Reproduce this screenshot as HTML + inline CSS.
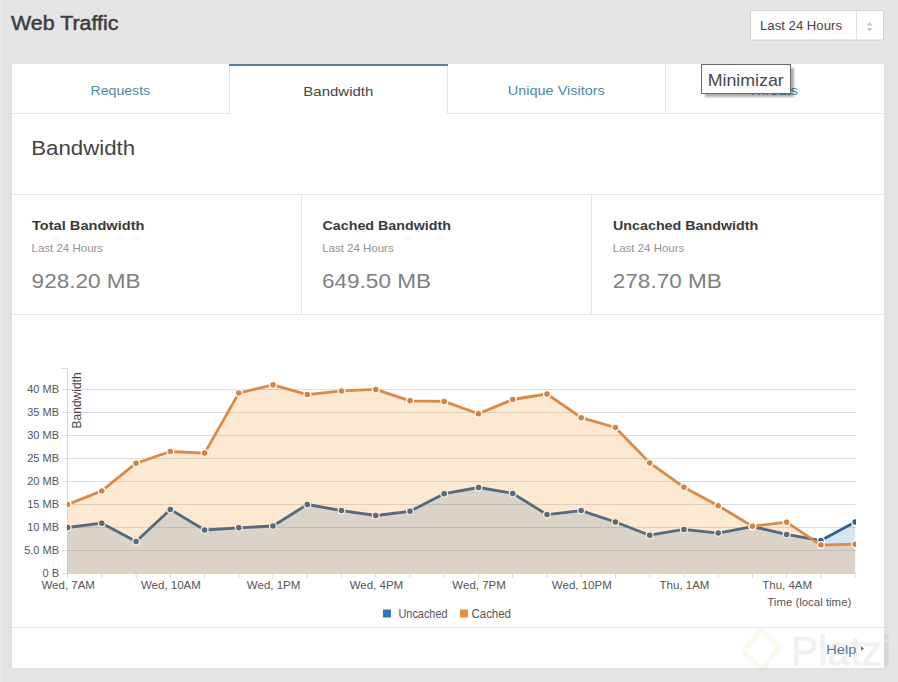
<!DOCTYPE html>
<html><head><meta charset="utf-8"><style>
html,body{margin:0;padding:0;background:#e5e5e5;width:898px;height:682px;overflow:hidden;}
svg{display:block;position:absolute;left:0;top:0;}
text{font-family:"Liberation Sans",sans-serif;}
.ax{font-size:11px;fill:#555;}
</style></head><body>
<svg width="898" height="682" viewBox="0 0 898 682">
<rect x="0" y="0" width="898" height="682" fill="#e5e5e5"/>
<text x="11" y="30" font-size="20.5" fill="#3d3d3d" stroke="#3d3d3d" stroke-width="0.5" textLength="107.5" lengthAdjust="spacingAndGlyphs">Web Traffic</text>
<!-- dropdown -->
<rect x="750.5" y="10.5" width="133" height="29.5" fill="#fff" stroke="#d2d2d2"/>
<line x1="856.5" y1="11" x2="856.5" y2="40" stroke="#e0e0e0"/>
<path d="M866.8,25.5 L869.6,22 L872.4,25.5 Z" fill="#c4c4c4"/>
<path d="M866.8,28 L869.6,31.5 L872.4,28 Z" fill="#c4c4c4"/>
<text x="760" y="30" font-size="13" fill="#444" textLength="82" lengthAdjust="spacingAndGlyphs">Last 24 Hours</text>
<!-- panel -->
<rect x="8" y="64" width="4" height="604.5" fill="#e1e1e1"/><rect x="884" y="64" width="3" height="604.5" fill="#e1e1e1"/><rect x="0" y="0" width="2" height="682" fill="#e9e9e9"/>
<rect x="9" y="668" width="878" height="3" fill="#e1e1e1"/>
<rect x="12" y="64" width="872" height="604" fill="#fff"/>
<!-- tabs -->
<line x1="12" y1="113.5" x2="229" y2="113.5" stroke="#e6e6e6"/>
<line x1="447" y1="113.5" x2="884" y2="113.5" stroke="#e6e6e6"/>
<line x1="229.5" y1="64" x2="229.5" y2="114" stroke="#e6e6e6"/>
<line x1="447.5" y1="64" x2="447.5" y2="114" stroke="#e6e6e6"/>
<line x1="665.5" y1="64" x2="665.5" y2="114" stroke="#e6e6e6"/>
<rect x="229" y="64" width="219" height="2" fill="#5a7f9f"/>
<text x="90.6" y="95" font-size="13.5" fill="#4b87a8" textLength="59.5" lengthAdjust="spacingAndGlyphs">Requests</text>
<text x="303.3" y="95.8" font-size="13.5" fill="#444" textLength="70" lengthAdjust="spacingAndGlyphs">Bandwidth</text>
<text x="507.8" y="95" font-size="13.5" fill="#4b87a8" textLength="97" lengthAdjust="spacingAndGlyphs">Unique Visitors</text>
<text x="748" y="95" font-size="13.5" fill="#4b87a8" textLength="50" lengthAdjust="spacingAndGlyphs">Threats</text>
<!-- heading -->
<text x="31.2" y="154.8" font-size="20.5" fill="#444" textLength="104" lengthAdjust="spacingAndGlyphs">Bandwidth</text>
<line x1="12" y1="194.5" x2="884" y2="194.5" stroke="#e6e6e6"/>
<line x1="301.5" y1="195" x2="301.5" y2="314" stroke="#e6e6e6"/>
<line x1="591.5" y1="195" x2="591.5" y2="314" stroke="#e6e6e6"/>
<line x1="12" y1="314.5" x2="884" y2="314.5" stroke="#e6e6e6"/>
<text x="32" y="229.9" font-size="13" font-weight="bold" fill="#3a3a3a" textLength="112.5" lengthAdjust="spacingAndGlyphs">Total Bandwidth</text>
<text x="322.5" y="229.9" font-size="13" font-weight="bold" fill="#3a3a3a" textLength="128.5" lengthAdjust="spacingAndGlyphs">Cached Bandwidth</text>
<text x="613" y="229.9" font-size="13" font-weight="bold" fill="#3a3a3a" textLength="145.3" lengthAdjust="spacingAndGlyphs">Uncached Bandwidth</text>
<text x="31.6" y="251.6" font-size="11.5" fill="#939393" textLength="71.5" lengthAdjust="spacingAndGlyphs">Last 24 Hours</text>
<text x="322.2" y="251.6" font-size="11.5" fill="#939393" textLength="71.5" lengthAdjust="spacingAndGlyphs">Last 24 Hours</text>
<text x="612.8" y="251.6" font-size="11.5" fill="#939393" textLength="71.5" lengthAdjust="spacingAndGlyphs">Last 24 Hours</text>
<text x="31.6" y="287.5" font-size="20.5" fill="#808080" textLength="109" lengthAdjust="spacingAndGlyphs">928.20 MB</text>
<text x="322" y="287.5" font-size="20.5" fill="#808080" textLength="109" lengthAdjust="spacingAndGlyphs">649.50 MB</text>
<text x="612.8" y="287.5" font-size="20.5" fill="#808080" textLength="109" lengthAdjust="spacingAndGlyphs">278.70 MB</text>
<!-- chart -->
<line x1="62" y1="573.5" x2="856" y2="573.5" stroke="#dedede" stroke-width="1"/><line x1="62" y1="550.5" x2="856" y2="550.5" stroke="#dedede" stroke-width="1"/><line x1="62" y1="527.5" x2="856" y2="527.5" stroke="#dedede" stroke-width="1"/><line x1="62" y1="504.5" x2="856" y2="504.5" stroke="#dedede" stroke-width="1"/><line x1="62" y1="481.5" x2="856" y2="481.5" stroke="#dedede" stroke-width="1"/><line x1="62" y1="458.5" x2="856" y2="458.5" stroke="#dedede" stroke-width="1"/><line x1="62" y1="435.5" x2="856" y2="435.5" stroke="#dedede" stroke-width="1"/><line x1="62" y1="412.5" x2="856" y2="412.5" stroke="#dedede" stroke-width="1"/><line x1="62" y1="389.5" x2="856" y2="389.5" stroke="#dedede" stroke-width="1"/>
<line x1="67.5" y1="368" x2="67.5" y2="573" stroke="#d8d8d8"/>
<line x1="61" y1="368.5" x2="67" y2="368.5" stroke="#d8d8d8"/>
<line x1="67.6" y1="573" x2="67.6" y2="578" stroke="#d8d8d8" stroke-width="1"/><line x1="101.8" y1="573" x2="101.8" y2="578" stroke="#d8d8d8" stroke-width="1"/><line x1="136.1" y1="573" x2="136.1" y2="578" stroke="#d8d8d8" stroke-width="1"/><line x1="170.3" y1="573" x2="170.3" y2="578" stroke="#d8d8d8" stroke-width="1"/><line x1="204.6" y1="573" x2="204.6" y2="578" stroke="#d8d8d8" stroke-width="1"/><line x1="238.8" y1="573" x2="238.8" y2="578" stroke="#d8d8d8" stroke-width="1"/><line x1="273.0" y1="573" x2="273.0" y2="578" stroke="#d8d8d8" stroke-width="1"/><line x1="307.3" y1="573" x2="307.3" y2="578" stroke="#d8d8d8" stroke-width="1"/><line x1="341.5" y1="573" x2="341.5" y2="578" stroke="#d8d8d8" stroke-width="1"/><line x1="375.8" y1="573" x2="375.8" y2="578" stroke="#d8d8d8" stroke-width="1"/><line x1="410.0" y1="573" x2="410.0" y2="578" stroke="#d8d8d8" stroke-width="1"/><line x1="444.2" y1="573" x2="444.2" y2="578" stroke="#d8d8d8" stroke-width="1"/><line x1="478.5" y1="573" x2="478.5" y2="578" stroke="#d8d8d8" stroke-width="1"/><line x1="512.7" y1="573" x2="512.7" y2="578" stroke="#d8d8d8" stroke-width="1"/><line x1="547.0" y1="573" x2="547.0" y2="578" stroke="#d8d8d8" stroke-width="1"/><line x1="581.2" y1="573" x2="581.2" y2="578" stroke="#d8d8d8" stroke-width="1"/><line x1="615.4" y1="573" x2="615.4" y2="578" stroke="#d8d8d8" stroke-width="1"/><line x1="649.7" y1="573" x2="649.7" y2="578" stroke="#d8d8d8" stroke-width="1"/><line x1="683.9" y1="573" x2="683.9" y2="578" stroke="#d8d8d8" stroke-width="1"/><line x1="718.2" y1="573" x2="718.2" y2="578" stroke="#d8d8d8" stroke-width="1"/><line x1="752.4" y1="573" x2="752.4" y2="578" stroke="#d8d8d8" stroke-width="1"/><line x1="786.6" y1="573" x2="786.6" y2="578" stroke="#d8d8d8" stroke-width="1"/><line x1="820.9" y1="573" x2="820.9" y2="578" stroke="#d8d8d8" stroke-width="1"/><line x1="855.1" y1="573" x2="855.1" y2="578" stroke="#d8d8d8" stroke-width="1"/>
<text x="59" y="577.3" text-anchor="end" class="ax">0 B</text><text x="59" y="554.3" text-anchor="end" class="ax">5.0 MB</text><text x="59" y="531.3" text-anchor="end" class="ax">10 MB</text><text x="59" y="508.3" text-anchor="end" class="ax">15 MB</text><text x="59" y="485.3" text-anchor="end" class="ax">20 MB</text><text x="59" y="462.3" text-anchor="end" class="ax">25 MB</text><text x="59" y="439.3" text-anchor="end" class="ax">30 MB</text><text x="59" y="416.3" text-anchor="end" class="ax">35 MB</text><text x="59" y="393.3" text-anchor="end" class="ax">40 MB</text>
<text transform="translate(81,400.4) rotate(-90)" text-anchor="middle" font-size="12" fill="#444" textLength="56" lengthAdjust="spacingAndGlyphs">Bandwidth</text>
<text x="68.2" y="589" text-anchor="middle" class="ax" style="font-size:11.5px">Wed, 7AM</text><text x="170.9" y="589" text-anchor="middle" class="ax" style="font-size:11.5px">Wed, 10AM</text><text x="273.6" y="589" text-anchor="middle" class="ax" style="font-size:11.5px">Wed, 1PM</text><text x="376.4" y="589" text-anchor="middle" class="ax" style="font-size:11.5px">Wed, 4PM</text><text x="479.1" y="589" text-anchor="middle" class="ax" style="font-size:11.5px">Wed, 7PM</text><text x="581.8" y="589" text-anchor="middle" class="ax" style="font-size:11.5px">Wed, 10PM</text><text x="684.5" y="589" text-anchor="middle" class="ax" style="font-size:11.5px">Thu, 1AM</text><text x="787.2" y="589" text-anchor="middle" class="ax" style="font-size:11.5px">Thu, 4AM</text>
<defs><clipPath id="plot"><rect x="67" y="360" width="789" height="230"/></clipPath></defs>
<g clip-path="url(#plot)">
<path d="M67.6,573.2 L67.6,527.5 L101.8,523.2 L136.1,541.4 L170.3,509.4 L204.6,530.0 L238.8,527.8 L273.0,526.0 L307.3,504.5 L341.5,510.6 L375.8,515.5 L410.0,511.3 L444.2,493.7 L478.5,487.5 L512.7,493.4 L547.0,514.6 L581.2,510.6 L615.4,522.0 L649.7,535.2 L683.9,529.4 L718.2,533.1 L752.4,526.6 L786.6,534.4 L820.9,540.6 L855.1,521.9 L855.1,573.2 Z" fill="rgba(47,123,191,0.2)"/>
<polyline points="67.6,527.5 101.8,523.2 136.1,541.4 170.3,509.4 204.6,530.0 238.8,527.8 273.0,526.0 307.3,504.5 341.5,510.6 375.8,515.5 410.0,511.3 444.2,493.7 478.5,487.5 512.7,493.4 547.0,514.6 581.2,510.6 615.4,522.0 649.7,535.2 683.9,529.4 718.2,533.1 752.4,526.6 786.6,534.4 820.9,540.6 855.1,521.9" fill="none" stroke="#2d6296" stroke-width="2.8" stroke-linejoin="round"/>
<circle cx="67.6" cy="527.5" r="3.4" fill="#2d6296" stroke="#fff" stroke-width="1.3"/><circle cx="101.8" cy="523.2" r="3.4" fill="#2d6296" stroke="#fff" stroke-width="1.3"/><circle cx="136.1" cy="541.4" r="3.4" fill="#2d6296" stroke="#fff" stroke-width="1.3"/><circle cx="170.3" cy="509.4" r="3.4" fill="#2d6296" stroke="#fff" stroke-width="1.3"/><circle cx="204.6" cy="530.0" r="3.4" fill="#2d6296" stroke="#fff" stroke-width="1.3"/><circle cx="238.8" cy="527.8" r="3.4" fill="#2d6296" stroke="#fff" stroke-width="1.3"/><circle cx="273.0" cy="526.0" r="3.4" fill="#2d6296" stroke="#fff" stroke-width="1.3"/><circle cx="307.3" cy="504.5" r="3.4" fill="#2d6296" stroke="#fff" stroke-width="1.3"/><circle cx="341.5" cy="510.6" r="3.4" fill="#2d6296" stroke="#fff" stroke-width="1.3"/><circle cx="375.8" cy="515.5" r="3.4" fill="#2d6296" stroke="#fff" stroke-width="1.3"/><circle cx="410.0" cy="511.3" r="3.4" fill="#2d6296" stroke="#fff" stroke-width="1.3"/><circle cx="444.2" cy="493.7" r="3.4" fill="#2d6296" stroke="#fff" stroke-width="1.3"/><circle cx="478.5" cy="487.5" r="3.4" fill="#2d6296" stroke="#fff" stroke-width="1.3"/><circle cx="512.7" cy="493.4" r="3.4" fill="#2d6296" stroke="#fff" stroke-width="1.3"/><circle cx="547.0" cy="514.6" r="3.4" fill="#2d6296" stroke="#fff" stroke-width="1.3"/><circle cx="581.2" cy="510.6" r="3.4" fill="#2d6296" stroke="#fff" stroke-width="1.3"/><circle cx="615.4" cy="522.0" r="3.4" fill="#2d6296" stroke="#fff" stroke-width="1.3"/><circle cx="649.7" cy="535.2" r="3.4" fill="#2d6296" stroke="#fff" stroke-width="1.3"/><circle cx="683.9" cy="529.4" r="3.4" fill="#2d6296" stroke="#fff" stroke-width="1.3"/><circle cx="718.2" cy="533.1" r="3.4" fill="#2d6296" stroke="#fff" stroke-width="1.3"/><circle cx="752.4" cy="526.6" r="3.4" fill="#2d6296" stroke="#fff" stroke-width="1.3"/><circle cx="786.6" cy="534.4" r="3.4" fill="#2d6296" stroke="#fff" stroke-width="1.3"/><circle cx="820.9" cy="540.6" r="3.4" fill="#2d6296" stroke="#fff" stroke-width="1.3"/><circle cx="855.1" cy="521.9" r="3.4" fill="#2d6296" stroke="#fff" stroke-width="1.3"/>
<path d="M67.6,573.2 L67.6,504.5 L101.8,490.9 L136.1,463.2 L170.3,451.5 L204.6,453.1 L238.8,393.1 L273.0,384.8 L307.3,394.6 L341.5,390.9 L375.8,389.4 L410.0,400.8 L444.2,401.4 L478.5,413.7 L512.7,399.5 L547.0,394.0 L581.2,417.7 L615.4,427.5 L649.7,462.9 L683.9,487.2 L718.2,505.7 L752.4,526.2 L786.6,522.2 L820.9,545.1 L855.1,544.2 L855.1,573.2 Z" fill="rgba(246,139,31,0.2)"/>
<polyline points="67.6,504.5 101.8,490.9 136.1,463.2 170.3,451.5 204.6,453.1 238.8,393.1 273.0,384.8 307.3,394.6 341.5,390.9 375.8,389.4 410.0,400.8 444.2,401.4 478.5,413.7 512.7,399.5 547.0,394.0 581.2,417.7 615.4,427.5 649.7,462.9 683.9,487.2 718.2,505.7 752.4,526.2 786.6,522.2 820.9,545.1 855.1,544.2" fill="none" stroke="#d98a48" stroke-width="2.8" stroke-linejoin="round"/>
<circle cx="67.6" cy="504.5" r="3.4" fill="#cf8345" stroke="#fff8f0" stroke-width="1.3"/><circle cx="101.8" cy="490.9" r="3.4" fill="#cf8345" stroke="#fff8f0" stroke-width="1.3"/><circle cx="136.1" cy="463.2" r="3.4" fill="#cf8345" stroke="#fff8f0" stroke-width="1.3"/><circle cx="170.3" cy="451.5" r="3.4" fill="#cf8345" stroke="#fff8f0" stroke-width="1.3"/><circle cx="204.6" cy="453.1" r="3.4" fill="#cf8345" stroke="#fff8f0" stroke-width="1.3"/><circle cx="238.8" cy="393.1" r="3.4" fill="#cf8345" stroke="#fff8f0" stroke-width="1.3"/><circle cx="273.0" cy="384.8" r="3.4" fill="#cf8345" stroke="#fff8f0" stroke-width="1.3"/><circle cx="307.3" cy="394.6" r="3.4" fill="#cf8345" stroke="#fff8f0" stroke-width="1.3"/><circle cx="341.5" cy="390.9" r="3.4" fill="#cf8345" stroke="#fff8f0" stroke-width="1.3"/><circle cx="375.8" cy="389.4" r="3.4" fill="#cf8345" stroke="#fff8f0" stroke-width="1.3"/><circle cx="410.0" cy="400.8" r="3.4" fill="#cf8345" stroke="#fff8f0" stroke-width="1.3"/><circle cx="444.2" cy="401.4" r="3.4" fill="#cf8345" stroke="#fff8f0" stroke-width="1.3"/><circle cx="478.5" cy="413.7" r="3.4" fill="#cf8345" stroke="#fff8f0" stroke-width="1.3"/><circle cx="512.7" cy="399.5" r="3.4" fill="#cf8345" stroke="#fff8f0" stroke-width="1.3"/><circle cx="547.0" cy="394.0" r="3.4" fill="#cf8345" stroke="#fff8f0" stroke-width="1.3"/><circle cx="581.2" cy="417.7" r="3.4" fill="#cf8345" stroke="#fff8f0" stroke-width="1.3"/><circle cx="615.4" cy="427.5" r="3.4" fill="#cf8345" stroke="#fff8f0" stroke-width="1.3"/><circle cx="649.7" cy="462.9" r="3.4" fill="#cf8345" stroke="#fff8f0" stroke-width="1.3"/><circle cx="683.9" cy="487.2" r="3.4" fill="#cf8345" stroke="#fff8f0" stroke-width="1.3"/><circle cx="718.2" cy="505.7" r="3.4" fill="#cf8345" stroke="#fff8f0" stroke-width="1.3"/><circle cx="752.4" cy="526.2" r="3.4" fill="#cf8345" stroke="#fff8f0" stroke-width="1.3"/><circle cx="786.6" cy="522.2" r="3.4" fill="#cf8345" stroke="#fff8f0" stroke-width="1.3"/><circle cx="820.9" cy="545.1" r="3.4" fill="#cf8345" stroke="#fff8f0" stroke-width="1.3"/><circle cx="855.1" cy="544.2" r="3.4" fill="#cf8345" stroke="#fff8f0" stroke-width="1.3"/>
</g>
<!-- legend -->
<rect x="383" y="609.5" width="8" height="8" fill="#3275b5"/>
<text x="398.5" y="617.8" font-size="12" fill="#555" textLength="49" lengthAdjust="spacingAndGlyphs">Uncached</text>
<rect x="460" y="609.5" width="8" height="8" fill="#eb8c3c"/>
<text x="471.5" y="617.8" font-size="12" fill="#555" textLength="39.5" lengthAdjust="spacingAndGlyphs">Cached</text>
<text x="767.3" y="606.4" font-size="11" fill="#555" textLength="84" lengthAdjust="spacingAndGlyphs">Time (local time)</text>
<line x1="12" y1="627.5" x2="884" y2="627.5" stroke="#e6e6e6"/>
<!-- watermark -->
<path d="M761.5,630 L779,647.5 L761.5,670 L743.5,651 Z" fill="none" stroke="rgba(200,220,120,0.13)" stroke-width="5.5" stroke-linejoin="round"/>
<g opacity="0.055"><text x="791" y="664.6" font-size="40" fill="#000" stroke="#000" stroke-width="1.1" textLength="100" lengthAdjust="spacingAndGlyphs">Platzi</text></g>
<text x="826.3" y="653.5" font-size="13" fill="#4f7b98" textLength="30" lengthAdjust="spacingAndGlyphs">Help</text>
<path d="M861,646 L864,648.5 L861,651 Z" fill="#55788f"/>
<!-- tooltip -->
<rect x="705" y="68" width="89" height="29" fill="rgba(0,0,0,0.32)" filter="url(#blur)"/>
<rect x="701.5" y="64.5" width="89" height="29" fill="#fff" stroke="#6a6a6a"/>
<text x="707.7" y="86" font-size="17" fill="#484848" textLength="76" lengthAdjust="spacingAndGlyphs">Minimizar</text>
<defs><filter id="blur"><feGaussianBlur stdDeviation="1"/></filter></defs>
</svg>
</body></html>
